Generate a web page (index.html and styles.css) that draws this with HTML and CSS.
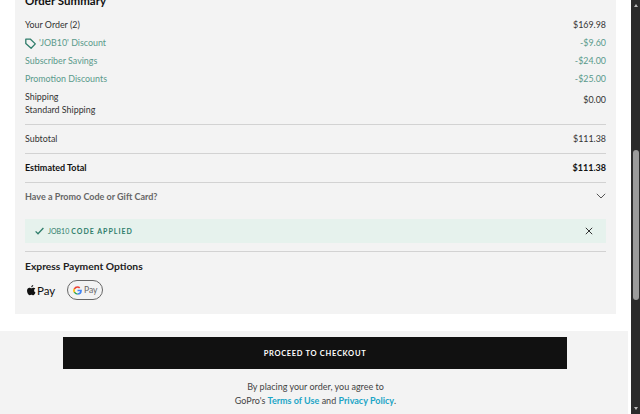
FILE: index.html
```html
<!DOCTYPE html>
<html lang="en">
<head>
    <meta charset="UTF-8">
    <title>Order Summary</title>
    <link rel="stylesheet" href="styles.css">
</head>
<body>
    <div class="window">
        <div class="page">
            <section class="summary">
                <h2>Order Summary</h2>
                <div class="row"><span>Your Order (2)</span><span>$169.98</span></div>
                <div class="row green">
                    <span class="tagged">
                        <svg class="tag" width="11" height="11" viewBox="0 0 11 11" fill="none" stroke="#2f7d6b" stroke-width="1.3" stroke-linejoin="round">
                            <path d="M.8 1.200h4.700l4.800 4.700-4.200 4.300L.8 5.500z"/>
                        </svg>
                        'JOB10' Discount
                    </span>
                    <span>-$9.60</span>
                </div>
                <div class="row green"><span>Subscriber Savings</span><span>-$24.00</span></div>
                <div class="row green"><span>Promotion Discounts</span><span>-$25.00</span></div>
                <div class="row shipping"><span>Shipping<br>Standard Shipping</span><span class="shipping-cost">$0.00</span></div>
                <div class="row line"><span>Subtotal</span><span>$111.38</span></div>
                <div class="row line total"><span>Estimated Total</span><span>$111.38</span></div>
                <div class="row line promo">
                    <span>Have a Promo Code or Gift Card?</span>
                    <svg width="10" height="6" viewBox="0 0 10 6" fill="none" stroke="#555" stroke-width="1">
                        <path d="M.8.8 5 5l4.200-4.200"/>
                    </svg>
                </div>
                <div class="applied">
                    <span class="applied-text">
                        <svg width="9" height="8" viewBox="0 0 9 8" fill="none" stroke="#2f7d6b" stroke-width="1.300">
                            <path d="M.6 4.400 3 6.800 8.400 1"/>
                        </svg>
                        <span class="code">JOB10</span><b>CODE APPLIED</b>
                    </span>
                    <svg width="8" height="8" viewBox="0 0 8 8" fill="none" stroke="#333" stroke-width="1">
                        <path d="M.8.8l6.400 6.400M7.200.8.8 7.200"/>
                    </svg>
                </div>
                <div class="divider"></div>
                <h3>Express Payment Options</h3>
                <div class="pay-options">
                    <span class="apple-pay">
                        <svg width="9" height="11" viewBox="0 0 10 12" fill="#111">
                            <path d="M7.200 2.900c-1 0-1.500.6-2.300.6S3.600 2.900 2.700 2.900C1.400 2.900 0 4 0 6.300 0 8.500 1.600 11.200 2.900 11.200c.7 0 1.100-.5 2-.5s1.200.5 2 .5c1 0 2-1.600 2.500-3-1.900-.8-2-3.700-.1-4.500-.5-.6-1.300-.8-2.100-.8z"/>
                            <path d="M6.900 0c.1 1.200-1 2.500-2.200 2.400C4.600 1.200 5.700.1 6.900 0z"/>
                        </svg>Pay
                    </span>
                    <span class="google-pay">
                        <svg width="9" height="9" viewBox="0 0 18 18" fill="none" stroke-width="3.400">
                            <path stroke="#4285f4" d="M9 9h7c0 4-3 7-7 7"/>
                            <path stroke="#34a853" d="M9 16c-3 0-5-1.500-6.200-4"/>
                            <path stroke="#fbbc05" d="M2.800 12C1.700 10 1.700 8 2.800 6"/>
                            <path stroke="#ea4335" d="M2.800 6C4 3.500 6 2 9 2c1.800 0 3.200.6 4.400 1.700"/>
                        </svg>
                        Pay
                    </span>
                </div>
            </section>
            <footer class="checkout">
                <button class="checkout-btn">PROCEED TO CHECKOUT</button>
                <p>By placing your order, you agree to<br>GoPro's <a href="#">Terms of Use</a> and <a href="#">Privacy Policy</a>.</p>
            </footer>
        </div>
        <div class="scrollbar">
            <span class="arrow up"></span>
            <span class="track"><span class="thumb"></span></span>
            <span class="arrow down"></span>
        </div>
    </div>
</body>
</html>
```

FILE: styles.css
```css
html, body {
    margin: 0;
    height: 100%;
    overflow: hidden;
}

body {
    font-family: Lato, Arial, sans-serif;
    font-size: 8.9px;
    color: #333;
    background: #fff;
}

.window {
    display: flex;
    height: 414px;
}

.page {
    flex: 1;
    overflow: hidden;
}

.summary {
    margin: -7px 15px 17px;
    height: 321px;
    padding: 0 10px;
    background: #f3f3f3;
}

h2 {
    margin: 0 0 1px;
    height: 21px;
    font-size: 11.5px;
    line-height: 16px;
    color: #111;
}

.row {
    display: flex;
    justify-content: space-between;
    align-items: center;
    height: 18px;
    line-height: 13px;
}

.green {
    color: #5a9a8b;
}

.tagged {
    display: flex;
    align-items: center;
    gap: 3px;
}

.tag {
    margin-top: 2px;
}

.shipping {
    align-items: flex-start;
    height: 27px;
    padding: 3px 0 7px;
}

.shipping-cost {
    margin-top: 3px;
}

.line {
    border-top: 1px solid #d2d2d2;
    height: 26px;
    padding-bottom: 2px;
}

.total {
    font-weight: 700;
    font-size: 9px;
    color: #111;
}

.promo {
    font-weight: 700;
    font-size: 9px;
    color: #666;
}

.applied {
    display: flex;
    justify-content: space-between;
    align-items: center;
    margin-top: 8px;
    height: 24px;
    padding: 0 13px 0 10px;
    background: #e6f2ed;
    color: #2f7d6b;
}

.applied-text {
    display: flex;
    align-items: center;
    gap: 4px;
}

.code {
    font-size: 7px;
}

.applied-text b {
    margin-left: -2px;
    font-size: 7px;
    letter-spacing: 1px;
}

.divider {
    margin-top: 8px;
    border-top: 1px solid #d2d2d2;
}

h3 {
    margin: 7px 0 7px;
    font-size: 10.3px;
    line-height: 14px;
    color: #222;
}

.pay-options {
    display: flex;
    align-items: center;
    gap: 12px;
    padding-left: 2px;
}

.apple-pay {
    display: flex;
    align-items: center;
    gap: 1px;
    font-size: 11.5px;
    color: #111;
}

.google-pay {
    display: flex;
    align-items: center;
    justify-content: center;
    gap: 2px;
    width: 34px;
    height: 18px;
    border: 1px solid #666;
    border-radius: 10px;
    font-size: 8.5px;
    color: #666;
}

.checkout {
    height: 77px;
    margin-right: 3px;
    padding-top: 6px;
    background: #f3f3f3;
    text-align: center;
}

.checkout-btn {
    display: block;
    margin-left: 63px;
    width: 504px;
    height: 32px;
    border: none;
    background: #111;
    color: #fff;
    font-family: inherit;
    font-size: 7.5px;
    font-weight: 700;
    letter-spacing: .7px;
}

.checkout p {
    margin: 11px 0 0 3px;
    font-size: 9px;
    line-height: 13.500px;
    color: #444;
}

.checkout a {
    color: #1ba5c6;
    font-weight: 700;
    text-decoration: none;
}

.scrollbar {
    display: flex;
    flex-direction: column;
    align-items: center;
    width: 9px;
    background: #2b2b2b;
}

.arrow {
    width: 0;
    height: 0;
    margin: 4px 0;
    border-left: 2.500px solid transparent;
    border-right: 2.500px solid transparent;
}

.up {
    border-bottom: 3px solid #bbb;
}

.down {
    border-top: 3px solid #bbb;
}

.track {
    flex: 1;
    padding-top: 139px;
}

.thumb {
    display: block;
    width: 6px;
    height: 150px;
    border-radius: 3px;
    background: #9b9b9b;
}
```
